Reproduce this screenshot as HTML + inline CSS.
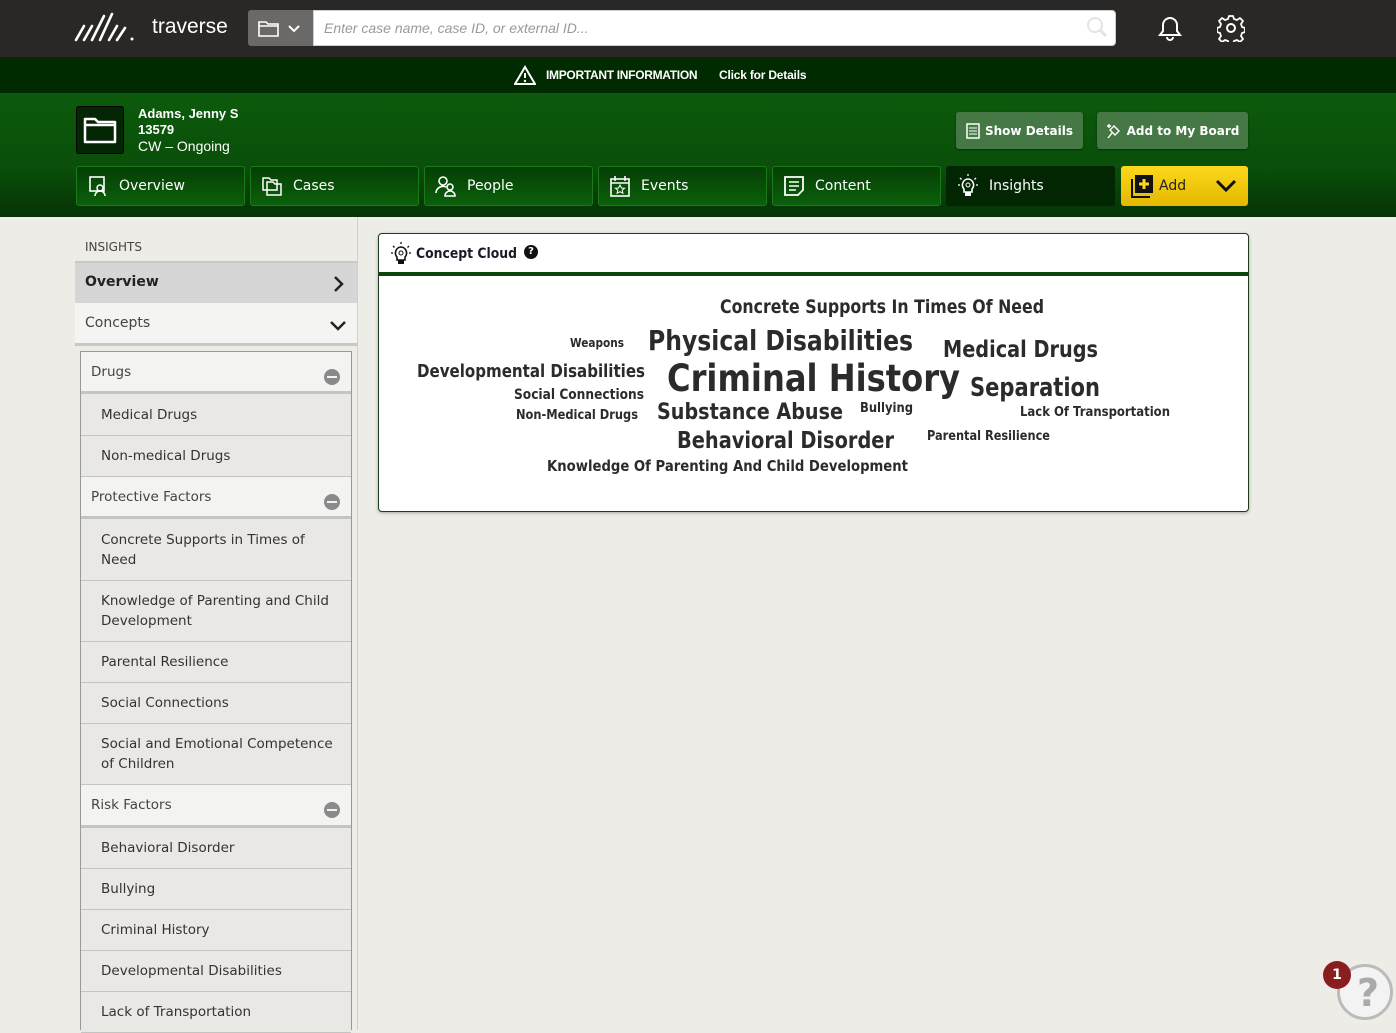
<!DOCTYPE html>
<html><head><meta charset="utf-8"><style>
*{box-sizing:border-box;margin:0;padding:0}
body{width:1396px;height:1030px;overflow:hidden;background:#edece7;font-family:"DejaVu Sans","Liberation Sans",sans-serif;position:relative;color:#333}
.abs{position:absolute}
#top{left:0;top:0;width:1396px;height:57px;background:#2a2826}
#imp{left:0;top:57px;width:1396px;height:36px;background:#002b00;color:#fff;font-weight:bold;font-size:12px;font-family:"Liberation Sans",sans-serif}
#hdr{left:0;top:93px;width:1396px;height:124px;background:linear-gradient(#0c5a0c,#0a4f0a 60%,#063306)}
.tab{position:absolute;top:166px;height:40px;width:169px;border:1px solid #1a7a1a;border-radius:3px;background:linear-gradient(#053e05,#0b600b);color:#fff;font-size:14px;display:flex;align-items:center;padding-left:10px;gap:10px}
.tab svg{flex:none}
.btn{position:absolute;top:112px;height:37px;background:#457845;border-radius:3px;color:#fff;font-size:12px;font-weight:bold;display:flex;align-items:center;justify-content:center;gap:5px;box-shadow:0 1px 2px rgba(0,0,0,.4)}
.row{position:absolute;left:81px;width:270px;font-size:13.5px;color:#333;background:#e9e8e5;border-bottom:1px solid #c4c4c4;padding-left:20px;padding-right:8px;display:flex;align-items:center;line-height:20px}
.hd{background:#f3f3f2;padding-left:10px;border-bottom:3px solid #c4c4c4;color:#444}
.min{position:absolute;right:11px;top:17px;width:16px;height:16px;border-radius:50%;background:#8a8a8a}
.min:after{content:"";position:absolute;left:3px;top:7px;width:10px;height:2px;background:#f3f3f2}
</style></head><body>
<div id="top" class="abs">
 <svg class="abs" style="left:74px;top:12px" width="70" height="30" viewBox="0 0 70 30"><g stroke="#fff" stroke-width="2.6" stroke-linecap="round"><line x1="2" y1="28" x2="10" y2="14"/><line x1="10" y1="28" x2="18" y2="14"/><line x1="18" y1="28" x2="30" y2="4"/><line x1="26" y1="28" x2="38" y2="2"/><line x1="35" y1="28" x2="43" y2="14"/><line x1="43" y1="28" x2="51" y2="16"/></g><circle cx="58" cy="27" r="1.5" fill="#fff"/></svg>
 <div class="abs" style="left:152px;top:15px;color:#fff;font-size:21px;font-family:'Liberation Sans',sans-serif">traverse</div>
 <div class="abs" style="left:248px;top:10px;width:65px;height:36px;background:#6a6968;border-radius:3px 0 0 3px">
  <svg class="abs" style="left:10px;top:8px" width="44" height="20" viewBox="0 0 44 20"><path d="M1 4h7l2 2h10v12H1z M1 8h19" fill="none" stroke="#fff" stroke-width="1.6"/><path d="M31 8l5 5 5-5" fill="none" stroke="#fff" stroke-width="2"/></svg>
 </div>
 <div class="abs" style="left:313px;top:10px;width:803px;height:36px;background:#fff;border-radius:0 4px 4px 0;border:1px solid #ccc;font-style:italic;color:#999;font-size:14px;padding:9px 10px;font-family:'Liberation Sans',sans-serif">Enter case name, case ID, or external ID...</div>
 <svg class="abs" style="left:1085px;top:15px" width="24" height="24"><circle cx="10" cy="10" r="7" fill="none" stroke="#e4e4e4" stroke-width="2"/><line x1="15" y1="15" x2="21" y2="21" stroke="#e4e4e4" stroke-width="3"/></svg>
 <svg class="abs" style="left:1156px;top:14px" width="28" height="28" viewBox="0 0 28 28"><path d="M4 21h20l-3-4v-6a7 7 0 0 0-14 0v6z M11 23a3 3 0 0 0 6 0" fill="none" stroke="#fff" stroke-width="2"/></svg>
 <svg class="abs" style="left:1217px;top:14px" width="28" height="28" viewBox="0 0 28 28"><circle cx="14" cy="14" r="4" fill="none" stroke="#fff" stroke-width="2"/><path d="M12 2h4l1 3 3 1 3-2 3 3-2 3 1 3 3 1v4l-3 1-1 3 2 3-3 3-3-2-3 1-1 3h-4l-1-3-3-1-3 2-3-3 2-3-1-3-3-1v-4l3-1 1-3-2-3 3-3 3 2 3-1z" fill="none" stroke="#fff" stroke-width="1.8" stroke-linejoin="round"/></svg>
</div>
<div id="imp" class="abs">
 <svg class="abs" style="left:514px;top:8px" width="22" height="20"><path d="M11 2L21 19H1z" fill="none" stroke="#fff" stroke-width="2"/><line x1="11" y1="8" x2="11" y2="13" stroke="#fff" stroke-width="2"/><circle cx="11" cy="16" r="1.2" fill="#fff"/></svg>
 <div class="abs" style="left:546px;top:11px;letter-spacing:-0.3px">IMPORTANT INFORMATION</div>
 <div class="abs" style="left:719px;top:11px;letter-spacing:-0.2px">Click for Details</div>
</div>
<div id="hdr" class="abs"></div>
<div class="abs" style="left:76px;top:106px;width:48px;height:48px;background:#052605;border:1px solid #000;border-radius:3px"><svg width="46" height="46"><path d="M8 12h10l3 3h17v20H8z M8 18h30" fill="none" stroke="#fff" stroke-width="2.5" stroke-linejoin="round"/></svg></div>
<div class="abs" style="left:138px;top:106px;color:#fff;font-size:13px;line-height:16px;font-family:'Liberation Sans',sans-serif"><b>Adams, Jenny S</b><br><b>13579</b><br><span style="font-size:14px">CW – Ongoing</span></div>
<div class="btn" style="left:956px;width:127px"><svg width="14" height="16"><rect x="1" y="1" width="12" height="14" fill="none" stroke="#fff" stroke-width="1.5"/><path d="M3 5h8M3 8h8M3 11h8" stroke="#fff"/></svg>Show Details</div>
<div class="btn" style="left:1097px;width:151px"><svg width="16" height="16"><path d="M8 3l5 5-4 4-5-5zM6 10l-4 5M1 3h4M3 1v4" fill="none" stroke="#fff" stroke-width="1.4"/></svg>Add to My Board</div>
<div class="tab" style="left:76px"><svg width="22" height="22"><rect x="3" y="2" width="14" height="14" fill="none" stroke="#fff" stroke-width="1.6"/><circle cx="13" cy="13" r="3" fill="none" stroke="#fff" stroke-width="1.5"/><path d="M8 21a5 5 0 0 1 10 0" fill="none" stroke="#fff" stroke-width="1.5"/></svg>Overview</div>
<div class="tab" style="left:250px"><svg width="22" height="22"><path d="M2 3h6l2 2h6v10H2z M6 7h6l2 2h6v11H6z" fill="none" stroke="#fff" stroke-width="1.5"/></svg>Cases</div>
<div class="tab" style="left:424px"><svg width="22" height="22"><circle cx="8" cy="6" r="4" fill="none" stroke="#fff" stroke-width="1.6"/><path d="M1 18a7 7 0 0 1 10-6" fill="none" stroke="#fff" stroke-width="1.6"/><circle cx="15" cy="12" r="3" fill="none" stroke="#fff" stroke-width="1.6"/><path d="M10 21a5 5 0 0 1 10 0z" fill="none" stroke="#fff" stroke-width="1.6"/></svg>People</div>
<div class="tab" style="left:598px"><svg width="22" height="22"><rect x="2" y="4" width="18" height="17" fill="none" stroke="#fff" stroke-width="1.6"/><path d="M2 8h18M6 1v5M16 1v5" stroke="#fff" stroke-width="1.6"/><path d="M11 10l1.5 3 3 .3-2.3 2 .7 3-2.9-1.6-2.9 1.6.7-3-2.3-2 3-.3z" fill="none" stroke="#fff" stroke-width="1"/></svg>Events</div>
<div class="tab" style="left:772px"><svg width="22" height="22"><path d="M2 2h18v13l-5 5H2z" fill="none" stroke="#fff" stroke-width="1.8"/><path d="M6 7h10M6 11h10M6 15h7" stroke="#fff" stroke-width="1.6"/></svg>Content</div>
<div class="tab" style="left:946px;background:#022502;border-color:#022502"><svg width="22" height="24"><path d="M11 5a6 6 0 0 0-4 10v3h8v-3a6 6 0 0 0-4-10z" fill="none" stroke="#fff" stroke-width="1.6"/><rect x="8" y="18" width="6" height="4" fill="#fff"/><circle cx="11" cy="11" r="2" fill="none" stroke="#fff"/><path d="M11 0v2M3 4l1.5 1.5M19 4l-1.5 1.5M1 11h2M19 11h2" stroke="#fff" stroke-width="1.3"/></svg>Insights</div>
<div class="abs" style="left:1121px;top:166px;width:127px;height:40px;background:linear-gradient(#fcd81c,#e3b800);border-radius:3px;font-size:14px;color:#222;display:flex;align-items:center;padding-left:10px">
 <svg width="24" height="24"><rect x="4" y="1" width="18" height="18" fill="#111"/><path d="M1 5v18h18" fill="none" stroke="#111" stroke-width="2"/><path d="M13 5v10M8 10h10" stroke="#fcd81c" stroke-width="3"/></svg><span style="margin-left:4px">Add</span>
 <svg class="abs" style="left:94px;top:12px" width="22" height="16"><path d="M2 3l9 9 9-9" fill="none" stroke="#111" stroke-width="3"/></svg>
</div>
<!-- sidebar -->
<div class="abs" style="left:357px;top:217px;width:1px;height:813px;background:#d0d0d0"></div>
<div class="abs" style="left:85px;top:240px;font-size:12px;color:#444">INSIGHTS</div>
<div class="abs" style="left:75px;top:261px;width:282px;height:42px;background:#d6d6d6;border-top:2px solid #c8c8c8;font-weight:bold;font-size:14px;color:#222;padding:11px 10px">Overview<svg class="abs" style="left:257px;top:12px" width="14" height="18"><path d="M3 2l7 7-7 7" fill="none" stroke="#222" stroke-width="2.5"/></svg></div>
<div class="abs" style="left:75px;top:303px;width:282px;height:43px;background:#f4f4f3;border-bottom:3px solid #c8c8c8;font-size:14px;color:#444;padding:12px 10px">Concepts<svg class="abs" style="left:254px;top:17px" width="18" height="12"><path d="M2 2l7 7 7-7" fill="none" stroke="#222" stroke-width="2.5"/></svg></div>
<div class="abs" style="left:80px;top:351px;width:272px;height:679px;border:1px solid #999;border-bottom:none;background:#e9e8e5"></div>
<div class="row hd" style="top:352px;height:42px">Drugs<span class="min"></span></div>
<div class="row" style="top:394px;height:42px">Medical Drugs</div>
<div class="row" style="top:436px;height:41px">Non-medical Drugs</div>
<div class="row hd" style="top:477px;height:42px">Protective Factors<span class="min"></span></div>
<div class="row" style="top:519px;height:62px">Concrete Supports in Times of Need</div>
<div class="row" style="top:581px;height:61px">Knowledge of Parenting and Child Development</div>
<div class="row" style="top:642px;height:41px">Parental Resilience</div>
<div class="row" style="top:683px;height:41px">Social Connections</div>
<div class="row" style="top:724px;height:61px">Social and Emotional Competence of Children</div>
<div class="row hd" style="top:785px;height:43px">Risk Factors<span class="min"></span></div>
<div class="row" style="top:828px;height:41px">Behavioral Disorder</div>
<div class="row" style="top:869px;height:41px">Bullying</div>
<div class="row" style="top:910px;height:41px">Criminal History</div>
<div class="row" style="top:951px;height:41px">Developmental Disabilities</div>
<div class="row" style="top:992px;height:41px">Lack of Transportation</div>
<!-- card -->
<div class="abs" style="left:378px;top:233px;width:871px;height:279px;background:#fff;border:1px solid #1e3d1e;border-radius:4px;box-shadow:0 1px 3px rgba(0,0,0,.3)">
 <div class="abs" style="left:0;top:38px;width:869px;height:4px;background:#0a450a"></div>
 <svg class="abs" style="left:11px;top:8px" width="22" height="24"><path d="M11 5a6 6 0 0 0-4 10v3h8v-3a6 6 0 0 0-4-10z" fill="none" stroke="#111" stroke-width="1.6"/><rect x="8" y="18" width="6" height="4" fill="#111"/><circle cx="11" cy="11" r="2" fill="none" stroke="#111"/><path d="M11 0v2M3 4l1.5 1.5M19 4l-1.5 1.5M1 11h2M19 11h2" stroke="#111" stroke-width="1.3"/></svg>
 <svg class="abs" style="left:36px;top:8px" width="110" height="22"><text x="1" y="16" font-family="DejaVu Sans,sans-serif" font-weight="bold" font-size="14" fill="#1a1a2a" textLength="101" lengthAdjust="spacingAndGlyphs">Concept Cloud</text></svg>
 <div class="abs" style="left:145px;top:11px;width:14px;height:14px;border-radius:50%;background:#111;color:#fff;font-size:10px;font-weight:bold;text-align:center;line-height:14px">?</div>
</div>
<svg class="abs" style="left:0;top:0" width="1396" height="1030"><g fill="#2b2b2b" font-family="DejaVu Sans, sans-serif" font-weight="bold">
<text x="720" y="313" font-size="19" textLength="324" lengthAdjust="spacingAndGlyphs">Concrete Supports In Times Of Need</text>
<text x="570" y="347" font-size="12" textLength="54" lengthAdjust="spacingAndGlyphs">Weapons</text>
<text x="648" y="350" font-size="28" textLength="265" lengthAdjust="spacingAndGlyphs">Physical Disabilities</text>
<text x="943" y="357" font-size="23" textLength="155" lengthAdjust="spacingAndGlyphs">Medical Drugs</text>
<text x="417" y="377" font-size="18" textLength="228" lengthAdjust="spacingAndGlyphs">Developmental Disabilities</text>
<text x="667" y="391" font-size="37" textLength="293" lengthAdjust="spacingAndGlyphs">Criminal History</text>
<text x="970" y="396" font-size="26" textLength="130" lengthAdjust="spacingAndGlyphs">Separation</text>
<text x="514" y="399" font-size="14" textLength="130" lengthAdjust="spacingAndGlyphs">Social Connections</text>
<text x="657" y="419" font-size="22" textLength="186" lengthAdjust="spacingAndGlyphs">Substance Abuse</text>
<text x="860" y="412" font-size="13" textLength="53" lengthAdjust="spacingAndGlyphs">Bullying</text>
<text x="1020" y="416" font-size="13" textLength="150" lengthAdjust="spacingAndGlyphs">Lack Of Transportation</text>
<text x="516" y="419" font-size="13" textLength="122" lengthAdjust="spacingAndGlyphs">Non-Medical Drugs</text>
<text x="677" y="448" font-size="23" textLength="217" lengthAdjust="spacingAndGlyphs">Behavioral Disorder</text>
<text x="927" y="440" font-size="13" textLength="123" lengthAdjust="spacingAndGlyphs">Parental Resilience</text>
<text x="547" y="471" font-size="15" textLength="361" lengthAdjust="spacingAndGlyphs">Knowledge Of Parenting And Child Development</text>
</g></svg>
<!-- help -->
<div class="abs" style="left:1337px;top:964px;width:56px;height:56px;border-radius:50%;border:3px solid #bbb;background:#f3f3f3;color:#aaa;font-size:38px;font-weight:bold;text-align:center;line-height:52px;padding-left:6px">?</div>
<div class="abs" style="left:1323px;top:961px;width:28px;height:28px;border-radius:50%;background:#8a1e1e;color:#fff;font-size:14px;font-weight:bold;text-align:center;line-height:28px">1</div>
</body></html>
